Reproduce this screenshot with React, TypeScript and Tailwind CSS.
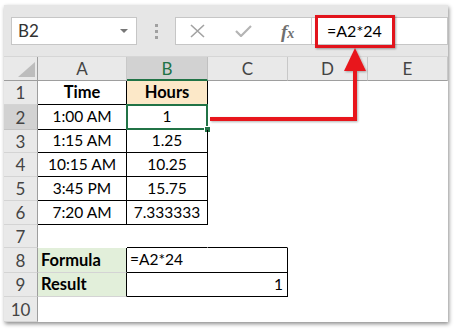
import React from "react";

const base =
  "relative flex items-center border-r border-b border-transparent px-[3px] text-[15.5px] text-black leading-none whitespace-nowrap overflow-visible";
const tbl = "justify-center border-r-black border-b-black";
const bold = "font-bold text-[16.5px]";

function RowHead({ n, sel }: { n: number; sel?: boolean }) {
  return (
    <div
      className={
        sel
          ? "flex items-center justify-center bg-[#d2d2d2] border-r border-r-[#8a8a8a] border-b border-b-[#c4c4c4] text-[#444] text-[17px] leading-none"
          : "flex items-center justify-center bg-[#e9e9e9] border-r border-r-[#9e9e9e] border-b border-b-[#d4d4d4] text-[#444] text-[17px] leading-none"
      }
    >
      {n}
    </div>
  );
}

function ColHead({ l, sel }: { l: string; sel?: boolean }) {
  return (
    <div
      className={
        sel
          ? "flex items-center justify-center bg-[#d2d2d2] border-r border-r-[#c0c0c0] border-b-2 border-b-[#217346] text-[#217346] text-[17px] leading-none"
          : "flex items-center justify-center bg-[#e9e9e9] border-r border-r-[#c8c8c8] border-b border-b-[#9e9e9e] text-[#444] text-[17px] leading-none"
      }
    >
      {l}
    </div>
  );
}

function Empty({ cls = "" }: { cls?: string }) {
  return <div className={`${base} ${cls}`} />;
}

export default function App() {
  const data: [string, string][] = [
    ["1:15 AM", "1.25"],
    ["10:15 AM", "10.25"],
    ["3:45 PM", "15.75"],
    ["7:20 AM", "7.333333"],
  ];
  return (
    <div className="w-[457px] h-[333px] bg-white font-['Lato',sans-serif] pt-[5px] pl-[4px]">
      <div className="relative w-[444px] h-[317px] bg-white shadow-[1px_2px_4px_rgba(0,0,0,0.45)] flex flex-col">
        {/* toolbar */}
        <div className="h-[52px] bg-[#e6e6e6] flex items-start pt-[12px] pl-[7px] border-b border-b-[#d6d6d6]">
          <div className="w-[126px] h-[28px] bg-white border border-[#c6c6c6] flex items-center justify-between pl-[6px] pr-[8px]">
            <span className="text-[17px] text-[#333]">B2</span>
            <svg width="8" height="5" viewBox="0 0 8 5">
              <path d="M0 0 L8 0 L4 4 Z" fill="#777" />
            </svg>
          </div>
          <div className="w-[38px] h-[28px] flex flex-col items-center justify-center gap-[3px]">
            <div className="w-[3px] h-[3px] bg-[#a0a0a0]" />
            <div className="w-[3px] h-[3px] bg-[#a0a0a0]" />
            <div className="w-[3px] h-[3px] bg-[#a0a0a0]" />
          </div>
          <div className="flex-1 h-[28px] bg-white border border-[#c6c6c6] flex items-center">
            <div className="w-[136px] h-full flex items-center border-r border-r-[#d0d0d0]">
              <svg className="ml-[14px]" width="15" height="14" viewBox="0 0 15 14">
                <path d="M1 1 L14 13 M14 1 L1 13" stroke="#a2a2a2" strokeWidth="1.6" />
              </svg>
              <svg className="ml-[30px]" width="17" height="12" viewBox="0 0 17 12">
                <path d="M1 6 L6 11 L16 1" stroke="#b4b4b4" strokeWidth="2.2" fill="none" />
              </svg>
              <span className="ml-[29px] font-['Liberation_Serif',serif] italic text-[#707070] text-[19px] leading-none font-bold">
                f<span className="text-[14px]">x</span>
              </span>
            </div>
            <span className="ml-[15px] text-[16px] text-black leading-none">=A2*24</span>
          </div>
        </div>

        {/* sheet */}
        <div className="grid grid-cols-[34px_89px_81px_80px_80px_80px] grid-rows-[24px_24px_25px_23px_24px_24px_24px_23px_25px_24px_25px] flex-1">
          {/* header row */}
          <div className="relative bg-[#e9e9e9] border-r border-r-[#9e9e9e] border-b border-b-[#9e9e9e]">
            <svg className="absolute right-[2px] bottom-[3px]" width="17" height="15" viewBox="0 0 17 15">
              <path d="M17 0 L17 15 L0 15 Z" fill="#bdbdbd" />
            </svg>
          </div>
          <ColHead l="A" />
          <ColHead l="B" sel />
          <ColHead l="C" />
          <ColHead l="D" />
          <ColHead l="E" />

          {/* row 1 */}
          <RowHead n={1} />
          <div className={`${base} ${tbl} ${bold}`}>Time</div>
          <div className={`${base} ${tbl} ${bold} bg-[#fce8c8]`}>Hours</div>
          <Empty />
          <Empty />
          <Empty />

          {/* row 2 */}
          <RowHead n={2} sel />
          <div className={`${base} ${tbl}`}>1:00 AM</div>
          <div className={`${base} ${tbl}`}>
            1
            <div className="absolute -left-[1px] -top-[1px] -right-[1px] -bottom-[1px] border-2 border-[#217346]" />
            <div className="absolute -right-[4px] -bottom-[4px] w-[7px] h-[7px] bg-[#217346] border border-white" />
          </div>
          <Empty />
          <Empty />
          <Empty />

          {data.map(([a, b], i) => (
            <React.Fragment key={i}>
              <RowHead n={i + 3} />
              <div className={`${base} ${tbl}`}>{a}</div>
              <div className={`${base} ${tbl}`}>{b}</div>
              <Empty />
              <Empty />
              <Empty />
            </React.Fragment>
          ))}

          {/* row 7 */}
          <RowHead n={7} />
          <Empty />
          <Empty cls="border-b-black" />
          <Empty cls="border-b-black" />
          <Empty />
          <Empty />

          {/* row 8 */}
          <RowHead n={8} />
          <div className={`${base} ${bold} bg-[#e2efda] border-r-black border-b-[#d4d4d4]`}>Formula</div>
          <div className={`${base} col-span-2 border-r-black border-b-black px-[1px]`}>=A2*24</div>
          <Empty />
          <Empty />

          {/* row 9 */}
          <RowHead n={9} />
          <div className={`${base} ${bold} bg-[#e2efda] border-r-black border-b-[#d4d4d4]`}>Result</div>
          <div className={`${base} col-span-2 justify-end border-r-black border-b-black pr-[4px]`}>1</div>
          <Empty />
          <Empty />

          {/* row 10 */}
          <RowHead n={10} />
          <Empty />
          <Empty />
          <Empty />
          <Empty />
          <Empty />
        </div>

        {/* red highlight box */}
        <div className="absolute left-[311px] top-[10px] w-[80px] h-[33px] border-[3px] border-[#e2141c] shadow-[1px_1px_2px_rgba(0,0,0,0.35)]" />

        {/* red arrow */}
        <svg className="absolute left-0 top-0" width="444" height="317" viewBox="0 0 444 317">
          <defs>
            <filter id="sh" x="-10%" y="-10%" width="130%" height="130%">
              <feDropShadow dx="1" dy="1" stdDeviation="0.8" floodColor="#000" floodOpacity="0.3" />
            </filter>
          </defs>
          <g filter="url(#sh)">
            <path d="M206 114 L351 114 L351 62" stroke="#e8141c" strokeWidth="4" fill="none" />
            <path d="M351 43 L362 66 L340 66 Z" fill="#e8141c" />
          </g>
        </svg>
      </div>
    </div>
  );
}
